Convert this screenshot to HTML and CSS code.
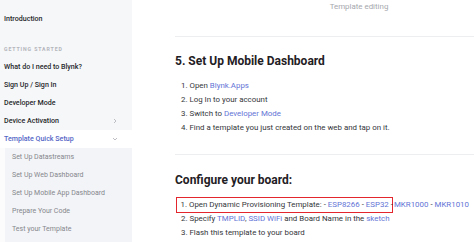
FILE: index.html
```html
<!DOCTYPE html>
<html>
<head>
<meta charset="utf-8">
<link rel="stylesheet" href="styles.css">
</head>
<body>
<div class="page">
  <nav class="sidebar">
    <ul class="nav">
      <li class="item intro">Introduction</li>
      <li class="section">GETTING STARTED</li>
      <li class="item">What do I need to Blynk?</li>
      <li class="item">Sign Up / Sign In</li>
      <li class="item">Developer Mode</li>
      <li class="item has-chev">Device Activation
        <svg class="chev" viewBox="0 0 6 6" width="6" height="6"><path d="M2 1 L4 3 L2 5" fill="none" stroke="#b5b7bd" stroke-width="0.9"/></svg>
      </li>
      <li class="item active has-chev">Template Quick Setup
        <svg class="chev" viewBox="0 0 6 6" width="6" height="6"><path d="M1 2 L3 4 L5 2" fill="none" stroke="#b5b7bd" stroke-width="0.9"/></svg>
      </li>
      <li class="sub">
        <ul class="subnav">
          <li>Set Up Datastreams</li>
          <li>Set Up Web Dashboard</li>
          <li>Set Up Mobile App Dashboard</li>
          <li>Prepare Your Code</li>
          <li>Test your Template</li>
        </ul>
      </li>
    </ul>
  </nav>
  <main class="content">
    <p class="caption">Template editing</p>
    <hr class="rule">
    <h2 class="heading">5. Set Up Mobile Dashboard</h2>
    <ol class="steps">
      <li>1. Open <a>Blynk.Apps</a></li>
      <li>2. Log In to your account</li>
      <li>3. Switch to <a>Developer Mode</a></li>
      <li>4. Find a template you just created on the web and tap on it.</li>
    </ol>
    <hr class="rule second">
    <h2 class="heading second">Configure your board:</h2>
    <ol class="steps">
      <li><span class="boxed">1. Open Dynamic Provisioning Template: - <a>ESP8266</a> - <a>ESP32</a>&nbsp;</span><span class="dash">-</span><a>MKR1000</a> - <a>MKR1010</a></li>
      <li>2. Specify <a>TMPLID</a>, <a>SSID WiFi</a> and Board Name in the <a>sketch</a></li>
      <li>3. Flash this template to your board</li>
    </ol>
  </main>
</div>
</body>
</html>
```
FILE: styles.css
```css
html, body {
  margin: 0;
  padding: 0;
  background: #ffffff;
  overflow: hidden;
}
body {
  width: 474px;
  height: 242px;
  font-family: Roboto, "Liberation Sans", sans-serif;
}
.page {
  display: flex;
  height: 242px;
}
.sidebar {
  width: 132px;
  flex: none;
  background: #f6f7f9;
}
.nav, .subnav {
  list-style: none;
  margin: 0;
  padding: 0;
}
.nav {
  padding-top: 10px;
}
.item {
  height: 18px;
  line-height: 18px;
  padding-left: 4px;
  font-size: 7.1px;
  font-weight: 500;
  color: #26272b;
  display: flex;
  align-items: center;
  justify-content: space-between;
  padding-right: 14px;
}
.intro {
  margin-bottom: 12px;
}
.section {
  height: 18px;
  line-height: 18px;
  padding-left: 4px;
  font-size: 5.2px;
  font-weight: 700;
  letter-spacing: 0.9px;
  color: #b3b5bb;
}
.active {
  background: #ffffff;
  color: #5466c6;
}
.chev {
  display: block;
}
.sub {
  border-left: 5px solid #fcfcfd;
  background: #f3f4f7;
  height: 100px;
}
.subnav li {
  height: 18px;
  line-height: 18px;
  padding-left: 7px;
  font-size: 7px;
  color: #85878d;
}
.content {
  flex: 1;
  min-width: 0;
  overflow: hidden;
  margin-left: 43px;
  color: #35363a;
}
.caption {
  margin: 0;
  height: 13px;
  line-height: 13px;
  text-align: center;
  padding-left: 69px;
  font-size: 7.9px;
  color: #a6a8ad;
}
.rule {
  margin: 23px 0 0 0;
  border: 0;
  border-top: 1px solid #eceef0;
}
.rule.second {
  margin-top: 19px;
}
.heading {
  margin: 0;
  padding-top: 16px;
  height: 16px;
  line-height: 16px;
  font-size: 12px;
  font-weight: 700;
  color: #1f2024;
}
.heading.second {
  padding-top: 17px;
}
.steps {
  list-style: none;
  margin: 0;
  padding: 10px 0 0 6px;
}
.steps li {
  height: 14px;
  line-height: 14px;
  font-size: 7.9px;
  white-space: nowrap;
}
.steps a {
  color: #6374d6;
}
.boxed {
  display: inline-block;
  height: 14px;
  line-height: 14px;
  border: 1.5px solid #e3262d;
  margin: -1.5px 0 -1.5px -5.5px;
  padding: 0 1px 0 4px;
}
.dash {
  margin-left: -2px;
  margin-right: 1px;
}
```
